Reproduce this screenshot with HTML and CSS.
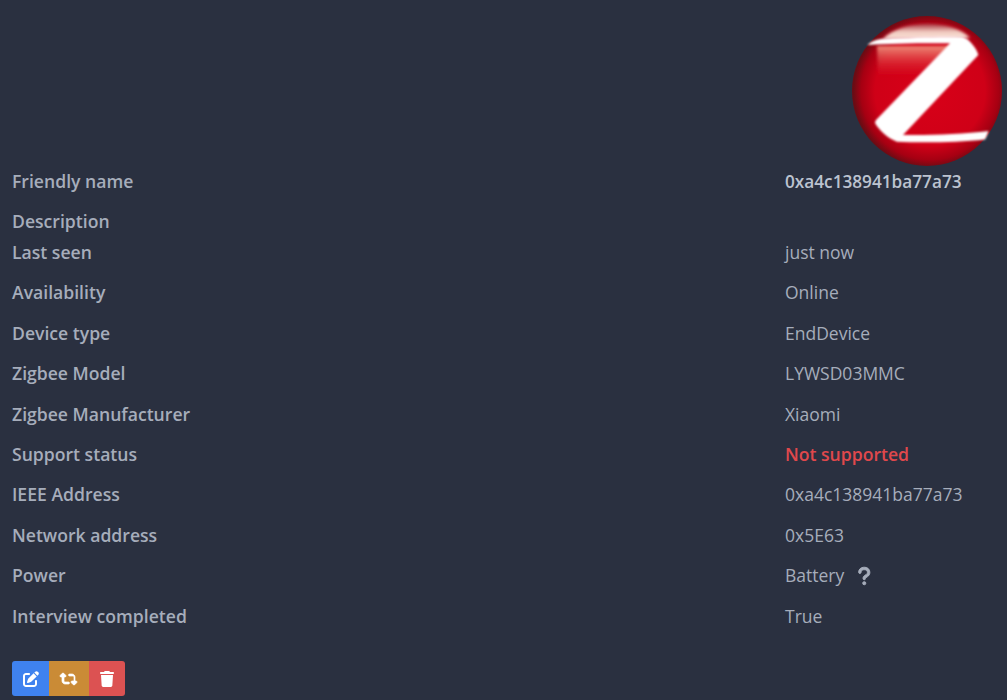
FILE: index.html
```html
<!DOCTYPE html>
<html lang="en">
<head>
<meta charset="utf-8">
<title>Device</title>
<link rel="stylesheet" href="styles.css">
</head>
<body>
<div class="logo-row">
  <svg class="logo" viewBox="0 0 150 150" aria-label="Zigbee logo">
    <defs>
      <radialGradient id="ball" cx="52%" cy="50%" r="51%">
        <stop offset="0" stop-color="#d80018"/>
        <stop offset="0.72" stop-color="#cf0017"/>
        <stop offset="0.9" stop-color="#a60012"/>
        <stop offset="1" stop-color="#6b0c14"/>
      </radialGradient>
      <linearGradient id="shine" x1="0" y1="0" x2="0" y2="1">
        <stop offset="0" stop-color="#ee8a78"/>
        <stop offset="1" stop-color="#d81020" stop-opacity="0"/>
      </linearGradient>
      <linearGradient id="cap" x1="0" y1="0" x2="0" y2="1">
        <stop offset="0" stop-color="#a8303a"/>
        <stop offset="0.55" stop-color="#f2cfc4"/>
        <stop offset="1" stop-color="#f8dcd2"/>
      </linearGradient>
      <filter id="soft"><feGaussianBlur stdDeviation="0.8"/></filter>
      <filter id="softer"><feGaussianBlur stdDeviation="1.4"/></filter>
    </defs>
    <circle cx="75" cy="75" r="75" fill="url(#ball)"/>
    <path d="M31 23 C50 3 100 3 118 22Z" fill="url(#cap)" filter="url(#softer)"/>
    <path d="M25 30 H100 L62 62 L26 62Z" fill="url(#shine)" filter="url(#softer)"/>
    <path d="M15.5 29 C20 25 25 23 33 22.5 C60 21 90 20 110 20.7 C117 22 125 33 126.3 39 L51 119 C80 119.5 110 118 136.5 115 C135.5 118 134.5 121 133 123.5 C105 126.5 70 127 45 125.7 C35 122 27 114 23 107 C23 105 24 104 26 102 L98 27.3 C70 27 40 27.5 15.5 29Z" fill="#fff" filter="url(#soft)"/>
  </svg>
</div>
<dl class="info">
  <dt>Friendly name</dt><dd class="strong">0xa4c138941ba77a73</dd>
  <dt>Description</dt><dd></dd>
  <dt>Last seen</dt><dd>just now</dd>
  <dt>Availability</dt><dd>Online</dd>
  <dt>Device type</dt><dd>EndDevice</dd>
  <dt>Zigbee Model</dt><dd>LYWSD03MMC</dd>
  <dt>Zigbee Manufacturer</dt><dd>Xiaomi</dd>
  <dt>Support status</dt><dd class="danger">Not supported</dd>
  <dt>IEEE Address</dt><dd>0xa4c138941ba77a73</dd>
  <dt>Network address</dt><dd>0x5E63</dd>
  <dt>Power</dt><dd class="power">Battery
    <svg class="q" viewBox="0 0 320 512"><path d="M80 160c0-35.3 28.7-64 64-64h32c35.3 0 64 28.7 64 64v3.6c0 21.8-11.1 42.1-29.4 53.8l-42.2 27.1c-25.2 16.2-40.4 44.1-40.4 74V320c0 17.7 14.3 32 32 32s32-14.3 32-32v-1.4c0-8.2 4.2-15.8 11-20.2l42.2-27.1c36.6-23.6 58.8-64.1 58.8-107.7V160c0-70.7-57.3-128-128-128H144C73.3 32 16 89.3 16 160c0 17.7 14.3 32 32 32s32-14.3 32-32zm80 320a40 40 0 1 0 0-80 40 40 0 1 0 0 80z"/></svg>
  </dd>
  <dt>Interview completed</dt><dd>True</dd>
</dl>
<div class="btn-group">
  <button class="btn blue" type="button" aria-label="Edit"><svg class="ic" viewBox="0 0 512 512"><path d="M471.6 21.7c-21.9-21.9-57.3-21.9-79.2 0L362.3 51.7l97.9 97.9 30.1-30.1c21.9-21.9 21.9-57.3 0-79.2L471.6 21.7zm-299.2 220c-6.1 6.1-10.8 13.6-13.5 21.9l-29.6 88.8c-2.9 8.6-.6 18.1 5.8 24.6s15.9 8.7 24.6 5.8l88.8-29.6c8.2-2.7 15.7-7.4 21.9-13.5L437.7 172.3 339.7 74.3 172.4 241.7zM96 64C43 64 0 107 0 160V416c0 53 43 96 96 96H352c53 0 96-43 96-96V320c0-17.7-14.3-32-32-32s-32 14.3-32 32v96c0 17.7-14.3 32-32 32H96c-17.7 0-32-14.3-32-32V160c0-17.7 14.3-32 32-32h96c17.7 0 32-14.3 32-32s-14.3-32-32-32H96z"/></svg></button>
  <button class="btn orange" type="button" aria-label="Reconfigure"><svg class="ic ic-bold" viewBox="0 0 576 512"><path d="M272 416c17.7 0 32-14.3 32-32s-14.3-32-32-32H160c-17.7 0-32-14.3-32-32V192h32c12.9 0 24.6-7.8 29.6-19.8s2.2-25.7-6.9-34.9l-64-64c-12.5-12.5-32.8-12.5-45.3 0l-64 64c-9.2 9.2-11.9 22.9-6.9 34.9s16.6 19.8 29.6 19.8l32 0 0 128c0 53 43 96 96 96H272zM304 96c-17.7 0-32 14.3-32 32s14.3 32 32 32l112 0c17.7 0 32 14.3 32 32l0 128H384c-12.9 0-24.6 7.8-29.6 19.8s-2.2 25.7 6.9 34.9l64 64c12.5 12.5 32.8 12.5 45.3 0l64-64c9.2-9.2 11.9-22.9 6.9-34.9s-16.6-19.8-29.6-19.8l-32 0 0-128c0-53-43-96-96-96L304 96z"/></svg></button>
  <button class="btn red" type="button" aria-label="Delete"><svg class="ic" viewBox="0 0 448 512"><path d="M135.2 17.7L128 32H32C14.3 32 0 46.3 0 64S14.3 96 32 96H416c17.7 0 32-14.3 32-32s-14.3-32-32-32H320l-7.2-14.3C307.4 6.8 296.3 0 284.2 0H163.8c-12.1 0-23.2 6.8-28.6 17.7zM416 128H32L53.2 467c1.6 25.3 22.6 45 47.9 45H346.9c25.3 0 46.3-19.7 47.9-45L416 128z"/></svg></button>
</div>
</body>
</html>
```
FILE: styles.css
```css
html, body { margin: 0; height: 700px; overflow: hidden; }
body {
  background: #2a3040;
  color: #a6adbb;
  font-family: "Open Sans", "Noto Sans", sans-serif;
  font-size: 17.5px;
  line-height: 27px;
  padding: 16px 5px 0 12px;
  box-sizing: border-box;
}
.logo-row { display: flex; justify-content: flex-end; height: 151.7px; }
.logo { width: 150px; height: 150px; display: block; }
.info {
  display: grid;
  grid-template-columns: 773px 1fr;
  margin: 0;
}
dt { font-weight: 600; margin-bottom: 4px; font-size: 17.6px; }
dd { margin: 0 0 13.4px; }
.strong { font-weight: 600; color: #bcc3d0; font-size: 17.2px; }
.danger { font-weight: 600; color: #e0484c; font-size: 17.6px; }
.power { display: flex; align-items: center; gap: 14px; }
.q { width: 12.5px; height: 20px; fill: #a6adbb; stroke: #a6adbb; stroke-width: 24; overflow: visible; }
.btn-group { display: flex; margin-top: 18.3px; }
.btn {
  display: flex; align-items: center; justify-content: center;
  height: 35px; border: 0; padding: 0; color: #fff;
}
.blue { width: 37px; background: #3f82ef; border-radius: 3px 0 0 3px; }
.orange { width: 40px; background: #ca8b36; }
.red { width: 36px; background: #dc5252; border-radius: 0 3px 3px 0; }
.ic { height: 16px; fill: #fff; display: block; overflow: visible; }
.ic-bold { stroke: #fff; stroke-width: 22; }
```
